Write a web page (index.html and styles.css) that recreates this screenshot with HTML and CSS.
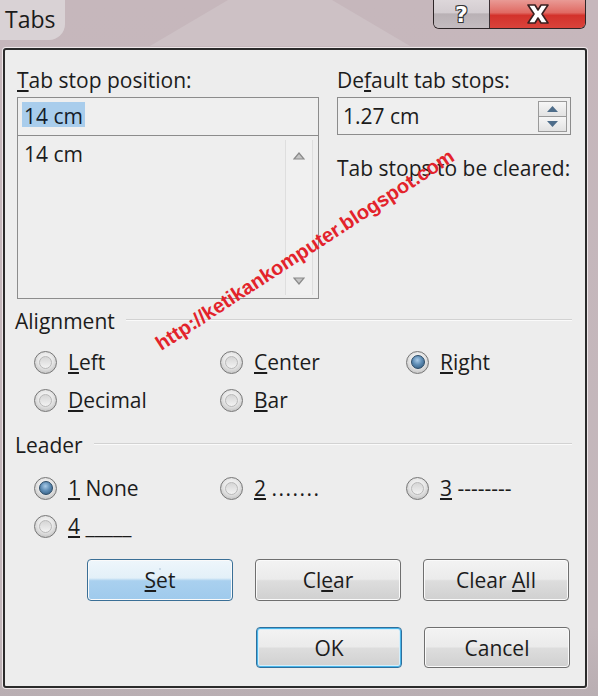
FILE: index.html
```html
<!DOCTYPE html>
<html lang="en">
<head>
    <meta charset="UTF-8">
    <meta name="viewport" content="width=device-width, initial-scale=1.0">
    <title>Tabs</title>
    <link rel="stylesheet" href="styles.css">
</head>
<body>
    <div class="window">
        <div class="titlebar">
            <div class="title">Tabs</div>
            <div class="caption-buttons">
                <div class="cap-btn help">?</div>
                <div class="cap-btn close">
                    <svg width="30" height="22" viewBox="0 0 30 22">
                        <path d="M5 2 L12 2 L15 7 L18 2 L25 2 L19 11 L25 20 L18 20 L15 15 L12 20 L5 20 L11 11 Z" fill="#ffffff" stroke="#3a2020" stroke-width="1.6" stroke-linejoin="round"/>
                    </svg>
                </div>
            </div>
        </div>

        <div class="client">
            <div class="top">
                <div class="col-left">
                    <div class="label"><u>T</u>ab stop position:</div>
                    <div class="combo-input"><span class="sel">14 cm</span></div>
                    <div class="combo-list">
                        <div class="list-item">14 cm</div>
                        <div class="scroll">
                            <svg width="12" height="8" viewBox="0 0 12 8"><path d="M1 7 L6 1 L11 7 Z" fill="#c4c4c4" stroke="#8a8a8a" stroke-width="1.2"/></svg>
                            <svg width="12" height="8" viewBox="0 0 12 8"><path d="M1 1 L6 7 L11 1 Z" fill="#c4c4c4" stroke="#8a8a8a" stroke-width="1.2"/></svg>
                        </div>
                    </div>
                </div>
                <div class="col-right">
                    <div class="label">De<u>f</u>ault tab stops:</div>
                    <div class="spin">
                        <span>1.27 cm</span>
                        <div class="spin-btns">
                            <div class="spin-btn"><svg width="11" height="6" viewBox="0 0 11 6"><path d="M0 6 L5.5 0 L11 6 Z" fill="#4e6d8a"/></svg></div>
                            <div class="spin-btn"><svg width="11" height="6" viewBox="0 0 11 6"><path d="M0 0 L5.5 6 L11 0 Z" fill="#4e6d8a"/></svg></div>
                        </div>
                    </div>
                    <div class="label cleared">Tab stops to be cleared:</div>
                </div>
            </div>

            <div class="group-head first">
                <span>Alignment</span>
                <div class="rule"></div>
            </div>
            <div class="options">
                <div class="option"><span class="radio"></span><span><u>L</u>eft</span></div>
                <div class="option"><span class="radio"></span><span><u>C</u>enter</span></div>
                <div class="option"><span class="radio checked"></span><span><u>R</u>ight</span></div>
                <div class="option"><span class="radio"></span><span><u>D</u>ecimal</span></div>
                <div class="option"><span class="radio"></span><span><u>B</u>ar</span></div>
            </div>

            <div class="group-head">
                <span>Leader</span>
                <div class="rule"></div>
            </div>
            <div class="options">
                <div class="option"><span class="radio checked"></span><span><u>1</u> None</span></div>
                <div class="option"><span class="radio"></span><span><u>2</u> <span class="dots">.......</span></span></div>
                <div class="option"><span class="radio"></span><span><u>3</u> --------</span></div>
                <div class="option"><span class="radio"></span><span><u>4</u> _____</span></div>
            </div>

            <div class="btn-row first">
                <div class="btn hot"><span><u>S</u>et</span></div>
                <div class="btn"><span>Cl<u>e</u>ar</span></div>
                <div class="btn"><span>Clear <u>A</u>ll</span></div>
            </div>
            <div class="btn-row second">
                <div class="btn default"><span>OK</span></div>
                <div class="btn"><span>Cancel</span></div>
            </div>

            <div class="watermark">http://ketikankomputer.blogspot.com</div>
        </div>
    </div>
</body>
</html>
```

FILE: styles.css
```css
body {
    margin: 0;
    background: #c9bcc0;
    font-family: "Open Sans", "Noto Sans", sans-serif;
    color: #1c1c1c;
}
.window {
    width: 598px;
    height: 696px;
    overflow: hidden;
    background: linear-gradient(#c6b7bc, #c3b7bb 90%, #b9aeb2);
}
.titlebar {
    position: relative;
    height: 48px;
    display: flex;
    justify-content: space-between;
    align-items: flex-start;
}
.titlebar::before {
    content: "";
    position: absolute;
    left: 150px;
    top: 0;
    width: 260px;
    height: 46px;
    background: #cdc1c5;
    clip-path: polygon(30% 0, 70% 0, 100% 100%, 0 100%);
}
.title {
    position: relative;
    font-size: 23px;
    line-height: 28px;
    padding: 5px 10px 7px 5px;
    background: #d9d2d5;
    border-radius: 0 0 16px 0;
    color: #1a1a1a;
}
.caption-buttons {
    position: relative;
    display: flex;
    margin-right: 12px;
    border: 1px solid #2e2628;
    border-top: 0;
    border-radius: 0 0 6px 6px;
    overflow: hidden;
}
.cap-btn {
    height: 28px;
    display: flex;
    align-items: center;
    justify-content: center;
}
.help {
    width: 55px;
    border-right: 1px solid #3a3034;
    background: linear-gradient(#ddd7da 0%, #d3ccd0 45%, #b9b1b5 50%, #c4bcc0 100%);
    font-family: "DejaVu Sans", sans-serif;
    font-weight: bold;
    font-size: 22px;
    color: #ffffff;
    text-shadow: -1px -1px 0 #333, 1px -1px 0 #333, -1px 1px 0 #333, 1px 1px 0 #333;
}
.close {
    width: 95px;
    background: linear-gradient(#e99a95 0%, #e06a63 45%, #d3322b 55%, #d9433b 100%);
}

.client {
    position: relative;
    box-sizing: border-box;
    margin: 0 11px 0 3px;
    height: 640px;
    padding: 0 0 0 10px;
    background: #ededed;
    border: 2px solid #2b2b2b;
    border-radius: 3px;
    box-shadow: 0 0 0 1px #efe8ea;
}
.top {
    display: flex;
    gap: 18px;
    padding: 18px 0 0 2px;
}
.col-left {
    width: 302px;
}
.col-right {
    width: 234px;
}
.label {
    font-size: 21px;
    line-height: 24px;
    height: 24px;
    white-space: nowrap;
}
.combo-input {
    box-sizing: border-box;
    height: 39px;
    margin-top: 5px;
    padding: 4px;
    border: 1px solid #8c8c8c;
    background: #efefef;
}
.sel {
    display: inline-block;
    height: 25px;
    line-height: 29px;
    padding: 0 2px;
    font-size: 21px;
    background: #a9cdec;
    color: #141c2a;
}
.combo-list {
    box-sizing: border-box;
    height: 163px;
    display: flex;
    border: 1px solid #8c8c8c;
    border-top: 0;
    background: #eeeeee;
}
.list-item {
    flex: 1;
    padding: 6px 0 0 6px;
    font-size: 21px;
    line-height: 24px;
}
.scroll {
    width: 26px;
    margin: 4px 5px 3px 0;
    display: flex;
    flex-direction: column;
    justify-content: space-between;
    align-items: center;
    padding: 12px 0 10px;
    border-left: 1px solid #dedede;
    border-right: 1px solid #dedede;
    background: #f0f0f0;
}
.spin {
    box-sizing: border-box;
    height: 38px;
    margin-top: 5px;
    display: flex;
    align-items: center;
    justify-content: space-between;
    padding: 0 3px 0 5px;
    border: 1px solid #8c8c8c;
    background: #efefef;
    font-size: 21px;
    line-height: 24px;
}
.spin-btns {
    width: 29px;
    height: 31px;
    display: flex;
    flex-direction: column;
    border: 1px solid #9a9a9a;
    box-sizing: border-box;
}
.spin-btn {
    flex: 1;
    display: flex;
    align-items: center;
    justify-content: center;
    background: linear-gradient(#f6f6f6, #e2e2e2);
}
.spin-btn + .spin-btn {
    border-top: 1px solid #9a9a9a;
}
.cleared {
    margin-top: 21px;
}

.group-head {
    display: flex;
    align-items: flex-start;
    margin-top: 14px;
    font-size: 21px;
    line-height: 24px;
}
.group-head.first {
    margin-top: 10px;
}
.rule {
    flex: 1;
    height: 1px;
    margin: 10px 13px 0 11px;
    background: #d2d2d2;
    box-shadow: 0 1px 0 #fafafa;
}
.options {
    display: grid;
    grid-template-columns: 186px 186px 186px;
    grid-auto-rows: 38px;
    margin-top: 10px;
    padding-left: 19px;
    font-size: 21px;
    line-height: 24px;
}
.group-head + .options + .group-head + .options {
    margin-top: 12px;
}
.option {
    display: flex;
    align-items: center;
    gap: 11px;
    white-space: nowrap;
}
.radio {
    box-sizing: border-box;
    width: 23px;
    height: 23px;
    border-radius: 50%;
    border: 1px solid #777777;
    background: radial-gradient(circle at 50% 40%, #ffffff 0%, #e8e8e8 45%, #c9c9c9 75%, #f4f4f4 100%);
    display: flex;
    align-items: center;
    justify-content: center;
}
.radio::after {
    content: "";
    width: 11px;
    height: 11px;
    border-radius: 50%;
    border: 1px solid #b8b8b8;
    background: linear-gradient(#d6d6d6, #f2f2f2);
}
.radio.checked::after {
    width: 12px;
    height: 12px;
    border: 1px solid #2a4a66;
    background: radial-gradient(circle at 45% 35%, #a9cbe8 0%, #5f8db5 45%, #2c5478 100%);
}
.dots {
    letter-spacing: 1.5px;
}

.btn-row {
    display: flex;
    gap: 22px;
}
.btn-row.first {
    margin-top: 14px;
    padding-left: 72px;
}
.btn-row.second {
    margin-top: 26px;
    padding-left: 241px;
}
.btn {
    box-sizing: border-box;
    width: 146px;
    height: 42px;
    display: flex;
    align-items: center;
    justify-content: center;
    font-size: 21px;
    white-space: nowrap;
    border: 1px solid #6f6f6f;
    border-radius: 4px;
    background: linear-gradient(#f3f3f3 0%, #ebebeb 48%, #dddddd 52%, #d0d0d0 100%);
    box-shadow: inset 0 0 0 1px #fafafa;
}
.btn.hot {
    border-color: #3a6f96;
    background:
        radial-gradient(circle, #c9d9e6 0.8px, transparent 1.2px) 0 0 / 6px 5px,
        linear-gradient(#eef6fb 0%, #e3f0f8 45%, #a9d0ef 52%, #9fcaec 100%);
    background-repeat: no-repeat, no-repeat;
    background-size: 100% 45%, 100% 100%;
}
.btn.default {
    border-color: #2f6f9c;
    box-shadow: inset 0 0 0 1px #49b6ea, inset 0 0 0 2px #d6eefa;
}
.btn-row.second .btn {
    height: 41px;
}

.watermark {
    position: absolute;
    left: 300px;
    top: 200px;
    transform: translate(-50%, -50%) rotate(-33deg);
    font-family: "Liberation Sans", Arial, sans-serif;
    font-weight: bold;
    font-size: 20px;
    color: #e3232b;
    white-space: nowrap;
}
```
